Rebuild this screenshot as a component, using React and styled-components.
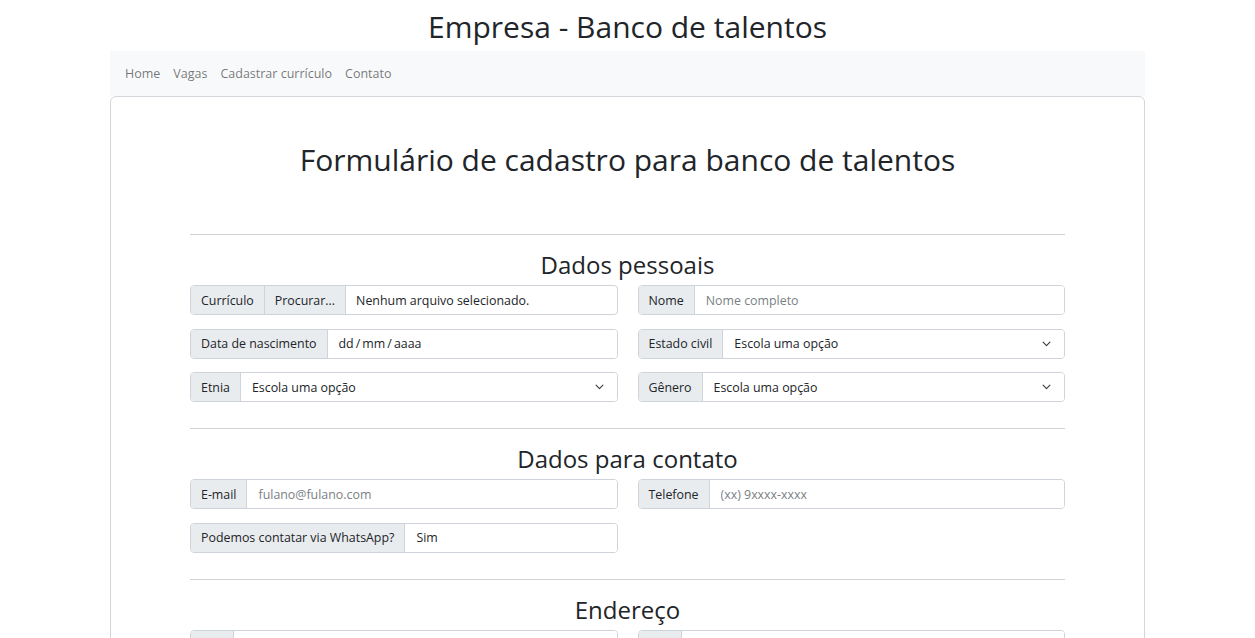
import React from "react";
import styled, { createGlobalStyle } from "styled-components";

const GlobalStyle = createGlobalStyle`
  * {
    box-sizing: border-box;
  }
  body {
    margin: 0;
    background: #fff;
    color: #212529;
    font-family: "Open Sans", "Noto Sans", Arial, sans-serif;
  }
`;

const Page = styled.div`
  width: 1035px;
  margin: 0 auto;
`;

const SiteTitle = styled.h1`
  margin: 0;
  padding: 8px 0 5px;
  font-size: 30px;
  font-weight: 400;
  line-height: 38px;
  text-align: center;
`;

const Navbar = styled.nav`
  display: flex;
  align-items: center;
  gap: 13px;
  height: 45px;
  padding: 0 15px;
  background: #f8f9fa;

  a {
    color: rgba(0, 0, 0, 0.55);
    font-size: 12.5px;
    text-decoration: none;
    cursor: pointer;
  }
`;

const Card = styled.main`
  min-height: 700px;
  padding: 44px 79px 40px;
  border: 1px solid #d3d6da;
  border-radius: 6px;
`;

const FormTitle = styled.h2`
  margin: 0 0 55px;
  font-size: 30px;
  font-weight: 400;
  line-height: 38px;
  text-align: center;
`;

const Divider = styled.hr`
  margin: 0;
  border: 0;
  border-top: 1px solid #cfd2d6;
`;

const Section = styled.section`
  margin-bottom: 26px;
`;

const SectionTitle = styled.h4`
  margin: 15px 0 6px;
  font-size: 24px;
  font-weight: 400;
  line-height: 29px;
  text-align: center;
`;

const Grid = styled.div`
  display: grid;
  grid-template-columns: 1fr 1fr;
  column-gap: 20px;
  row-gap: 13.5px;
`;

const Group = styled.div`
  position: relative;
  display: flex;
  height: 30px;
  border: 1px solid #ced4da;
  border-radius: 4px;
  overflow: hidden;
  font-size: 12.4px;
`;

const Addon = styled.span`
  display: flex;
  align-items: center;
  padding: 0 10px;
  background: #e9ecef;
  color: #212529;
  white-space: nowrap;
  border-right: 1px solid #ced4da;
`;

const Field = styled.input`
  flex: 1;
  min-width: 0;
  padding: 0 11px;
  border: 0;
  outline: none;
  font: inherit;
  color: #212529;
  background: #fff;

  &::placeholder {
    color: #7a7f85;
  }
`;

const FileName = styled.span`
  display: flex;
  align-items: center;
  padding: 0 10px;
  color: #212529;
`;

const Select = styled.select`
  flex: 1;
  min-width: 0;
  padding: 0 32px 0 11px;
  border: 0;
  outline: none;
  appearance: none;
  background: #fff;
  font: inherit;
  color: #212529;
`;

const Chevron = styled.svg`
  position: absolute;
  right: 12px;
  top: 50%;
  width: 11px;
  height: 11px;
  margin-top: -6px;
  pointer-events: none;
`;

const ChoiceGroup = ({ label, options }) => (
  <Group>
    <Addon>{label}</Addon>
    <Select defaultValue="">
      <option value="">Escola uma opção</option>
      {options.map((o) => (
        <option key={o}>{o}</option>
      ))}
    </Select>
    <Chevron viewBox="0 0 16 16">
      <path
        d="M3 6l5 5 5-5"
        fill="none"
        stroke="#343a40"
        strokeWidth="1.6"
        strokeLinecap="round"
        strokeLinejoin="round"
      />
    </Chevron>
  </Group>
);

const TextGroup = ({ label, ...rest }) => (
  <Group>
    <Addon>{label}</Addon>
    <Field {...rest} />
  </Group>
);

export default function App() {
  return (
    <>
      <GlobalStyle />
      <Page>
        <SiteTitle>Empresa - Banco de talentos</SiteTitle>
        <Navbar>
          <a>Home</a>
          <a>Vagas</a>
          <a>Cadastrar currículo</a>
          <a>Contato</a>
        </Navbar>

        <Card>
          <FormTitle>Formulário de cadastro para banco de talentos</FormTitle>

          <Divider />
          <Section>
            <SectionTitle>Dados pessoais</SectionTitle>
            <Grid>
              <Group>
                <Addon>Currículo</Addon>
                <Addon>Procurar...</Addon>
                <FileName>Nenhum arquivo selecionado.</FileName>
              </Group>
              <TextGroup label="Nome" placeholder="Nome completo" />
              <TextGroup
                label="Data de nascimento"
                defaultValue={"dd\u2009/\u2009mm\u2009/\u2009aaaa"}
              />
              <ChoiceGroup
                label="Estado civil"
                options={["Solteiro(a)", "Casado(a)", "Divorciado(a)", "Viúvo(a)"]}
              />
              <ChoiceGroup
                label="Etnia"
                options={["Amarela", "Branca", "Indígena", "Parda", "Preta"]}
              />
              <ChoiceGroup
                label="Gênero"
                options={["Feminino", "Masculino", "Outro"]}
              />
            </Grid>
          </Section>

          <Divider />
          <Section>
            <SectionTitle>Dados para contato</SectionTitle>
            <Grid>
              <TextGroup label="E-mail" placeholder="fulano@fulano.com" />
              <TextGroup label="Telefone" placeholder="(xx) 9xxxx-xxxx" />
              <TextGroup label="Podemos contatar via WhatsApp?" defaultValue="Sim" />
            </Grid>
          </Section>

          <Divider />
          <Section>
            <SectionTitle>Endereço</SectionTitle>
            <Grid>
              <TextGroup label="CEP" />
              <TextGroup label="Rua" />
            </Grid>
          </Section>
        </Card>
      </Page>
    </>
  );
}
